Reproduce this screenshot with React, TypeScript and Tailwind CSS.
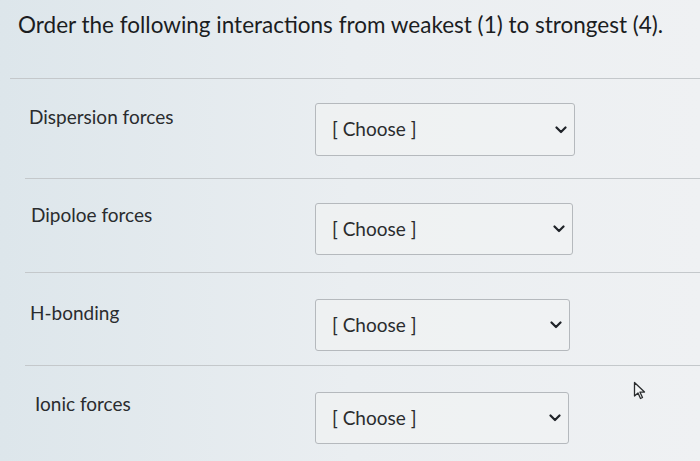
import React from "react";

const rows = [
  { label: "Dispersion forces", h: "h-[99px]", lpt: "pt-[27px]", spt: "pt-[24px]", sh: "h-[53px]", lx: "pl-[29px]", sw: "w-[260px]" },
  { label: "Dipoloe forces", h: "h-[93px]", lpt: "pt-[25px]", spt: "pt-[24px]", sh: "h-[52px]", lx: "pl-[31px]", sw: "w-[258px]" },
  { label: "H-bonding", h: "h-[92px]", lpt: "pt-[29px]", spt: "pt-[26px]", sh: "h-[52px]", lx: "pl-[30px]", sw: "w-[255px]" },
  { label: "Ionic forces", h: "h-[99px]", lpt: "pt-[27px]", spt: "pt-[26px]", sh: "h-[52px]", lx: "pl-[35px]", sw: "w-[254px]" },
];

function Chevron() {
  return (
    <svg width="12" height="8" viewBox="0 0 12 8" fill="none">
      <path d="M1.5 1.5 L6 6 L10.5 1.5" stroke="#1f2328" strokeWidth="2.2" strokeLinecap="round" strokeLinejoin="round" />
    </svg>
  );
}

export default function App() {
  return (
    <div
      className="w-[700px] h-[461px] overflow-hidden relative bg-gradient-to-r from-[#dde6eb] via-[#eaeef1] to-[#eff1f3] text-[#222426]"
      style={{ fontFamily: "Lato, 'Open Sans', sans-serif" }}
    >
      <div className="h-[78px] pl-[18px] pt-[9px]">
        <h1 className="text-[22.5px] leading-[32px] font-normal text-[#1b1d1f]">
          Order the following interactions from weakest (1) to strongest (4).
        </h1>
      </div>
      <div className="ml-[10px] h-px bg-[#c4c8cb]" />
      {rows.map((r, i) => (
        <div key={r.label}>
          <div className={`flex ${r.h}`}>
            <div className={`w-[313px] ${r.lx} ${r.lpt}`}>
              <span className="text-[19px] leading-[22px] text-[#2a2c2e]">{r.label}</span>
            </div>
            <div className={`pl-[2px] ${r.spt}`}>
              <div
                className={`${r.sw} ${r.sh} border border-[#b5b9bd] rounded-[3px] bg-[#f1f3f4]/60 flex items-center justify-between pl-[16px] pr-[7px]`}
              >
                <span className="text-[19px] text-[#2a2c2e]">[ Choose ]</span>
                <Chevron />
              </div>
            </div>
          </div>
          {i < rows.length - 1 && <div className="ml-[25px] h-px bg-[#c4c8cb]" />}
        </div>
      ))}
      <svg className="absolute left-[633px] top-[381px]" width="14" height="20" viewBox="0 0 14 20">
        <path d="M1.5 1.5 L1.5 15 L5 12 L7.5 17.5 L9.5 16.5 L7 11.2 L11.5 11 Z" fill="#f4f6f7" stroke="#2a2c2e" strokeWidth="1.3" strokeLinejoin="round" />
      </svg>
    </div>
  );
}
